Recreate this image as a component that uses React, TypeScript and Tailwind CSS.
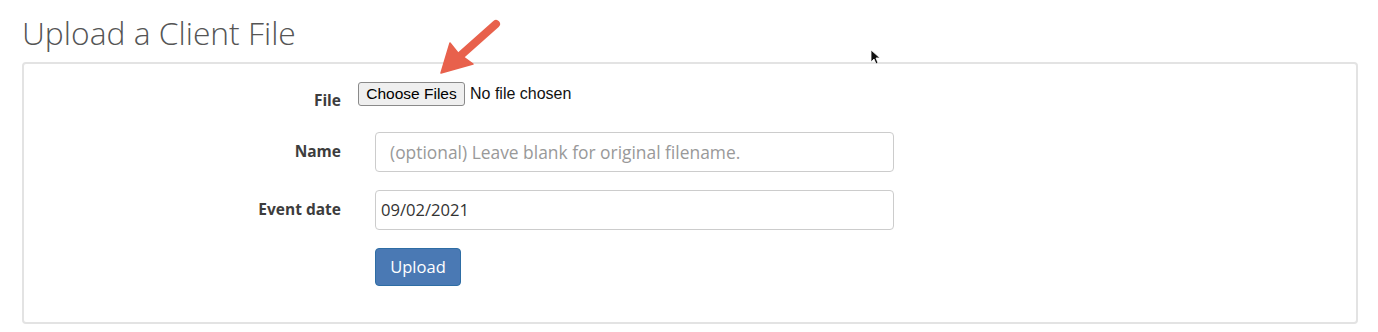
import React from "react"

const FONT = "font-['Open_Sans',_'Liberation_Sans',_sans-serif]"

function Label({ children }: { children: React.ReactNode }) {
  return (
    <div className="w-[317px] shrink-0 text-right text-[15.5px] font-bold text-[#3d3d3d]">
      {children}
    </div>
  )
}

export default function App() {
  return (
    <div className={`relative w-[1378px] h-[332px] bg-white ${FONT}`}>
      <h1 className="pl-[22px] pt-[15px] h-[62px] text-[31.8px] leading-[36px] font-light text-[#555]">
        Upload a Client File
      </h1>

      <div className="mx-[22px] mr-[20px] h-[262px] rounded-[4px] border-2 border-[#e3e3e3] bg-white">
        {/* File */}
        <div className="flex items-center pt-[18px]">
          <Label>
            <span className="relative top-[7px]">File</span>
          </Label>
          <div className="ml-[17px] flex items-center">
            <span className="flex h-[24px] w-[107px] items-center justify-center rounded-[3px] border border-[#8a8a8a] bg-[#efefef] font-['Liberation_Sans',_sans-serif] text-[15.5px] text-black">
              Choose Files
            </span>
            <span className="ml-[5px] font-['Liberation_Sans',_sans-serif] text-[16px] text-[#111]">
              No file chosen
            </span>
          </div>
        </div>

        {/* Name */}
        <div className="mt-[26px] flex items-center">
          <Label>Name</Label>
          <div className="ml-[34px] flex h-[40px] w-[519px] items-center rounded-[4px] border border-[#ccc] px-[14px] text-[17.4px] text-[#999]">
            (optional) Leave blank for original filename.
          </div>
        </div>

        {/* Event date */}
        <div className="mt-[18px] flex items-center">
          <Label>Event date</Label>
          <div className="ml-[34px] flex h-[40px] w-[519px] items-center rounded-[4px] border border-[#ccc] px-[5px] text-[16.6px] text-[#333]">
            09/02/2021
          </div>
        </div>

        {/* Upload */}
        <div className="mt-[18px] flex">
          <div className="w-[317px] shrink-0" />
          <button className="ml-[34px] h-[38px] w-[86px] rounded-[4px] border border-[#2e6da4] bg-[#4a79b4] text-[16.5px] text-white">
            Upload
          </button>
        </div>
      </div>

      {/* annotation arrow */}
      <svg className="absolute left-0 top-0" width="1378" height="332" viewBox="0 0 1378 332">
        <line x1="496" y1="24" x2="460" y2="56" stroke="#e8614c" strokeWidth="8" strokeLinecap="round" />
        <polygon points="441,73 450,43 458,53 473,64" fill="#e8614c" stroke="#e8614c" strokeWidth="1.5" strokeLinejoin="round" />
        {/* mouse cursor */}
        <path d="M871,50 L871,62 L874,59 L876,64 L878,63 L876,58 L880,58 Z" fill="#111" stroke="#fff" strokeWidth="0.8" />
      </svg>
    </div>
  )
}
